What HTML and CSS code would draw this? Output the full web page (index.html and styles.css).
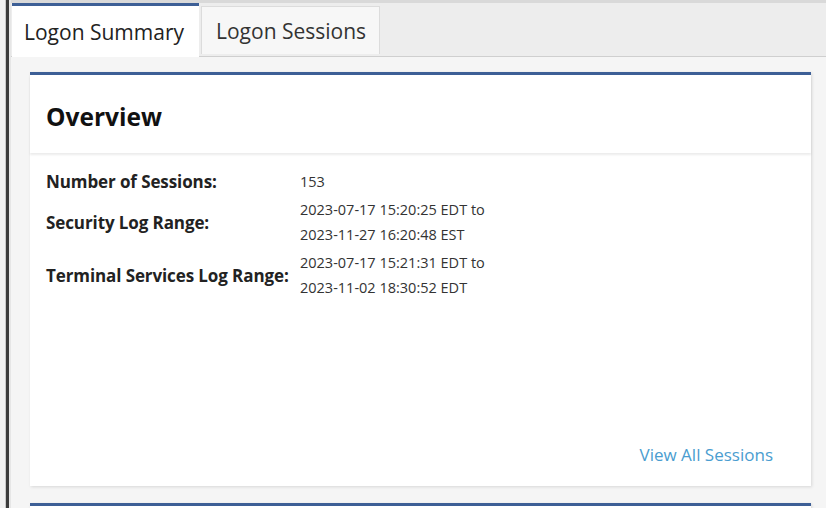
FILE: index.html
```html
<!DOCTYPE html>
<html>
<head>
<meta charset="utf-8">
<link rel="stylesheet" href="styles.css">
</head>
<body>
<div class="app">
  <div class="sidebar-edge">
    <div class="edge-light"></div>
    <div class="edge-dark"></div>
    <div class="edge-gap"></div>
  </div>
  <div class="main">
    <div class="tabstrip">
      <div class="tab active">Logon Summary</div>
      <div class="tab">Logon Sessions</div>
    </div>
    <div class="content">
      <div class="card">
        <div class="card-header">Overview</div>
        <div class="card-body">
          <div class="facts">
            <div class="label">Number of Sessions:</div>
            <div class="value">153</div>
            <div class="label">Security Log Range:</div>
            <div class="value">2023-07-17 15:20:25 EDT to<br>2023-11-27 16:20:48 EST</div>
            <div class="label">Terminal Services Log Range:</div>
            <div class="value">2023-07-17 15:21:31 EDT to<br>2023-11-02 18:30:52 EDT</div>
          </div>
          <div class="spacer"></div>
          <div class="footer"><a class="link" href="#">View All Sessions</a></div>
        </div>
      </div>
      <div class="card next"></div>
    </div>
  </div>
</div>
</body>
</html>
```

FILE: styles.css
```css
html, body {
  margin: 0;
  padding: 0;
  height: 100%;
  overflow: hidden;
  background: #f5f5f5;
  font-family: "Open Sans", "Noto Sans", sans-serif;
}
.app {
  display: flex;
  height: 508px;
}
.sidebar-edge {
  display: flex;
  flex: none;
  width: 11px;
}
.edge-light {
  width: 6px;
  background: #f0f0f0;
  border-right: 1px solid #c8c8c8;
  box-sizing: border-box;
}
.edge-dark {
  width: 3px;
  background: #3a3a3a;
}
.edge-gap {
  width: 2px;
  background: #e6e6e6;
}
.main {
  flex: 1;
  display: flex;
  flex-direction: column;
  min-width: 0;
}
.tabstrip {
  display: flex;
  align-items: flex-end;
  height: 58px;
  box-sizing: border-box;
  background: #ededed;
  border-top: 3px solid #d9d9d9;
  border-bottom: 1px solid #cfcfcf;
  padding-left: 1px;
  gap: 2px;
}
.tab {
  height: 48px;
  box-sizing: border-box;
  display: flex;
  align-items: center;
  padding: 0 13px 0 14px;
  font-size: 21px;
  color: #333;
  background: #f7f7f7;
  border: 1px solid #dcdcdc;
  border-bottom: none;
  margin-bottom: 2px;
}
.tab.active {
  height: 54px;
  width: 187px;
  padding: 0 12px;
  background: #fff;
  border: none;
  border-top: 3px solid #3d5f96;
  margin-bottom: -1px;
  color: #222;
}
.content {
  flex: 1;
  padding: 15px 15px 0 19px;
  display: flex;
  flex-direction: column;
  gap: 17px;
}
.card {
  background: #fff;
  border-top: 3px solid #3d5f96;
  box-shadow: 1px 1px 3px rgba(0,0,0,0.12);
  display: flex;
  flex-direction: column;
  height: 414px;
  box-sizing: border-box;
}
.card.next {
  flex: none;
  height: 10px;
}
.card-header {
  height: 78px;
  display: flex;
  align-items: center;
  padding-left: 16px;
  padding-top: 4px;
  box-sizing: border-box;
  font-size: 24.5px;
  font-weight: 700;
  color: #111;
  box-shadow: 0 2px 2px rgba(0,0,0,0.08);
  position: relative;
}
.card-body {
  flex: 1;
  display: flex;
  flex-direction: column;
  padding: 16px 16px 20px 16px;
}
.facts {
  display: grid;
  grid-template-columns: 254px auto;
  row-gap: 3px;
  align-items: center;
}
.label {
  font-weight: 700;
  font-size: 17px;
  color: #222;
  letter-spacing: -0.1px;
}
.value {
  font-size: 14.5px;
  color: #333;
  line-height: 25px;
}
.spacer { flex: 1; }
.footer {
  display: flex;
  justify-content: flex-end;
  padding-right: 22px;
}
.link {
  font-size: 17px;
  color: #4a9dd0;
  text-decoration: none;
}
```
